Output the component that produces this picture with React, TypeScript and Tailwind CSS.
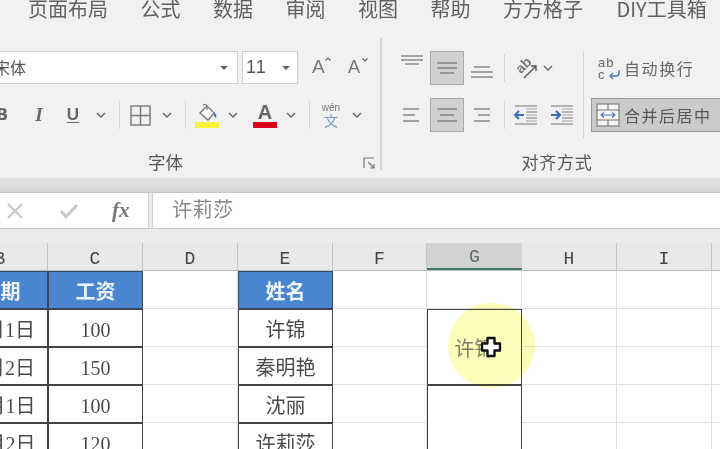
const tabs = ['页面布局', '公式', '数据', '审阅', '视图', '帮助', '方方格子', 'DIY工具箱'];
const columns = ['B', 'C', 'D', 'E', 'F', 'G', 'H', 'I', 'J'];
const serif = "font-['Liberation_Serif','Noto_Sans_CJK_SC',serif]";

const Chev = () => (
  <svg width="10" height="6" viewBox="0 0 10 6" fill="none" stroke="#6b6b6b" strokeWidth="1.5">
    <path d="M1 1l4 4 4-4" />
  </svg>
);

const Caret = () => (
  <svg width="8" height="4" viewBox="0 0 8 4" fill="#666">
    <path d="M0 0h8L4 4z" />
  </svg>
);

const VSep = () => <div className="mx-auto h-[28px] w-px bg-[#d6d6d6]" />;

// lines = [x1, x2, y] triples
const Lines = ({ lines }: { lines: number[][] }) => (
  <svg width="24" height="24" viewBox="0 0 24 24" stroke="#777" strokeWidth="1.3">
    {lines.map((l, i) => (
      <line key={i} x1={l[0]} x2={l[1]} y1={l[2]} y2={l[2]} />
    ))}
  </svg>
);

const Indent = ({ flip }: { flip?: boolean }) => (
  <svg width="24" height="22" viewBox="0 0 24 22" fill="none">
    <g stroke="#777" strokeWidth="1.2">
      <path d="M1 2h22M1 20h22M12 8h11M12 14h11" />
      <path d="M12 5h11M12 11h11M12 17h11" opacity="0.6" />
    </g>
    {flip ? (
      <path d="M1 11h8M6 7l4 4-4 4" stroke="#3f6fb5" strokeWidth="2.2" />
    ) : (
      <path d="M10 11H2M5 7l-4 4 4 4" stroke="#3f6fb5" strokeWidth="2.2" />
    )}
  </svg>
);

const FontGroup = () => (
  <div className="-ml-[15px] flex h-[132px] w-[397px] shrink-0 flex-col border-r-2 border-[#d4d4d4] pt-[13px]">
    <div className="flex h-[33px] items-center">
      <div className="flex h-[33px] w-[253px] items-center justify-between border border-[#cfcfcf] bg-white pl-[8px] pr-[9px] text-[16px] text-[#555]">
        <span className="-mt-[2px]">宋体</span>
        <Caret />
      </div>
      <div className="ml-[4px] flex h-[33px] w-[56px] items-center justify-between border border-[#cfcfcf] bg-white pl-[3px] pr-[7px] font-['Liberation_Sans',sans-serif] text-[18px] tracking-[1px] text-[#555]">
        <span>11</span>
        <Caret />
      </div>
      <div className="relative ml-[14px] w-[16px] font-['Liberation_Sans',sans-serif] text-[19px] text-[#777]">
        A
        <svg className="absolute -right-[3px] top-[4px]" width="6" height="4" viewBox="0 0 6 4" fill="none" stroke="#666" strokeWidth="1.2">
          <path d="M0.5 3.5L3 1l2.5 2.5" />
        </svg>
      </div>
      <div className="relative ml-[20px] w-[16px] font-['Liberation_Sans',sans-serif] text-[18px] text-[#777]">
        A
        <svg className="absolute -right-[4px] top-[4px]" width="6" height="4" viewBox="0 0 6 4" fill="none" stroke="#666" strokeWidth="1.2">
          <path d="M0.5 0.5L3 3l2.5-2.5" />
        </svg>
      </div>
    </div>
    <div className="mt-[14px] flex h-[34px] items-center">
      <div className="w-[34px] text-center font-['DejaVu_Sans',sans-serif] text-[16px] font-bold text-[#666]">B</div>
      <div className="ml-[3px] w-[34px] text-center font-['Liberation_Serif',serif] text-[19px] font-bold italic text-[#666]">I</div>
      <div className="w-[34px] text-center font-['Liberation_Sans',sans-serif] text-[17px] font-bold text-[#666] underline underline-offset-2">U</div>
      <div className="flex w-[22px] justify-center"><Chev /></div>
      <div className="w-[14px]"><VSep /></div>
      <div className="flex w-[28px] justify-center">
        <svg width="21" height="21" viewBox="0 0 21 21" fill="none" stroke="#777" strokeWidth="1.4">
          <rect x="1" y="1" width="19" height="19" />
          <path d="M10.5 1v19M1 10.5h19" />
        </svg>
      </div>
      <div className="flex w-[26px] justify-center"><Chev /></div>
      <div className="w-[10px]"><VSep /></div>
      <div className="flex w-[34px] justify-center">
        <svg width="26" height="26" viewBox="0 0 26 26" fill="none">
          <path d="M6 11l7-7 7 7-6 7z" stroke="#777" strokeWidth="1.3" fill="#fff" />
          <path d="M9 3a3 3 0 0 1 4 1v4" stroke="#777" strokeWidth="1.2" />
          <path d="M20 10c2 2 3 4 2 6l-2-2z" fill="#4d6ea8" />
          <rect x="1" y="20" width="24" height="6" fill="#f5f53a" />
        </svg>
      </div>
      <div className="flex w-[18px] justify-center"><Chev /></div>
      <div className="ml-[6px] flex w-[34px] flex-col items-center">
        <span className="font-['Liberation_Sans',sans-serif] text-[20px] leading-[18px] font-bold text-[#666]">A</span>
        <div className="mt-[1px] h-[6px] w-[24px] bg-[#d9001b]" />
      </div>
      <div className="flex w-[18px] justify-center"><Chev /></div>
      <div className="w-[18px]"><VSep /></div>
      <div className="flex w-[26px] flex-col items-center leading-none">
        <span className="font-['Liberation_Sans',sans-serif] text-[10px] text-[#777]">wén</span>
        <span className="text-[14px] text-[#6f9bd0]">文</span>
      </div>
      <div className="flex w-[26px] justify-center"><Chev /></div>
    </div>
    <div className="relative mt-[22px] flex h-[16px] shrink-0 items-center justify-center pr-[34px] text-[17.5px] text-[#555]">
      <span>字体</span>
      <svg className="absolute right-[5px] top-[3px]" width="12" height="12" viewBox="0 0 12 12" fill="none" stroke="#777" strokeWidth="1.2">
        <path d="M1 11V1h10M5 5l6 6M11 7v4H7" />
      </svg>
    </div>
  </div>
);

const AlignBox = ({ children }: { children: React.ReactNode }) => (
  <div className="flex h-[34px] w-[34px] items-center justify-center border border-[#a9a9a9] bg-[#d0d0d0]">{children}</div>
);

const AlignGroup = () => (
  <div className="flex h-[132px] flex-1 flex-col pt-[13px]">
    <div className="flex h-[87px]">
      <div className="flex w-[201px] shrink-0 flex-col gap-[13px]">
        <div className="flex h-[34px] items-center">
          <div className="ml-[17px] flex w-[25px] justify-center self-start">
            <Lines lines={[[1, 23, 5], [1, 23, 9], [5, 19, 13]]} />
          </div>
          <div className="ml-[6px]">
            <AlignBox><Lines lines={[[2, 22, 7], [2, 22, 12], [5, 19, 17]]} /></AlignBox>
          </div>
          <div className="flex w-[36px] justify-center self-end">
            <Lines lines={[[4, 20, 6], [1, 23, 11], [1, 23, 16]]} />
          </div>
          <div className="w-[8px]"><VSep /></div>
          <div className="flex w-[35px] justify-center">
            <div className="relative h-[24px] w-[24px]">
              <span className="absolute left-[1px] top-[1px] -rotate-45 font-['Liberation_Sans',sans-serif] text-[14px] leading-[16px] font-bold text-[#777]">ab</span>
              <svg className="absolute inset-0" width="24" height="24" viewBox="0 0 24 24" fill="none" stroke="#555" strokeWidth="1.4">
                <path d="M10 22l12-12M17 10h5v5" />
              </svg>
            </div>
          </div>
          <div className="flex w-[10px] justify-center"><Chev /></div>
        </div>
        <div className="flex h-[34px] items-center">
          <div className="ml-[17px] flex w-[25px] justify-center">
            <Lines lines={[[3, 19, 6], [3, 15, 12], [3, 19, 18]]} />
          </div>
          <div className="ml-[6px]">
            <AlignBox><Lines lines={[[2, 22, 6], [5, 19, 12], [2, 22, 18]]} /></AlignBox>
          </div>
          <div className="flex w-[36px] justify-center">
            <Lines lines={[[4, 20, 6], [8, 20, 12], [4, 20, 18]]} />
          </div>
          <div className="w-[8px]"><VSep /></div>
          <div className="ml-[6px] flex w-[24px] justify-center"><Indent /></div>
          <div className="ml-[12px] flex w-[24px] justify-center"><Indent flip /></div>
        </div>
      </div>
      <div className="w-px self-stretch bg-[#d6d6d6]" />
      <div className="flex flex-1 flex-col gap-[13px] pl-[7px]">
        <div className="flex h-[34px] items-center text-[16px] tracking-[1.6px] text-[#666]">
          <div className="relative ml-[6px] h-[24px] w-[26px] shrink-0">
            <span className="absolute left-[1px] -top-[3px] font-['Liberation_Sans',sans-serif] text-[13px] tracking-[1px] text-[#666]">ab</span>
            <span className="absolute left-[1px] top-[9px] font-['Liberation_Sans',sans-serif] text-[13px] text-[#666]">c</span>
            <svg className="absolute inset-0" width="26" height="24" viewBox="0 0 26 24" fill="none" stroke="#4d79b8" strokeWidth="1.4">
              <path d="M22 14v3a3 3 0 0 1-3 3h-6M16 17l-3 3 3 3" />
            </svg>
          </div>
          <span className="ml-[1px] whitespace-nowrap">自动换行</span>
        </div>
        <div className="-mr-[40px] flex h-[34px] items-center border border-[#999] bg-[#cbcbcb] text-[16px] tracking-[1.5px] text-[#555]">
          <svg className="ml-[4px] shrink-0" width="24" height="24" viewBox="0 0 24 24" fill="#f5f5f5" stroke="#777" strokeWidth="1.1">
            <rect x="1" y="1" width="22" height="22" />
            <path d="M1 7h22M1 17h22M12 1v6M12 17v6" />
            <path d="M5 12h14M8 9.5L5 12l3 2.5M16 9.5l3 2.5-3 2.5" stroke="#4d79b8" />
          </svg>
          <span className="ml-[4px] whitespace-nowrap">合并后居中</span>
        </div>
      </div>
    </div>
    <div className="mt-[16px] flex h-[16px] w-[350px] shrink-0 items-center justify-center text-[17px] tracking-[0.8px] text-[#555]">对齐方式</div>
  </div>
);

const Ribbon = () => (
  <div className="h-[178px] overflow-hidden bg-[#f1f1f1]">
    <div className="flex h-[18px] items-center gap-[32.5px] pl-[28px] whitespace-nowrap text-[20px] leading-[18px] text-[#606060]">
      {tabs.map((tab) => (
        <span key={tab} className={tab === 'DIY工具箱' ? 'ml-[1px]' : ''}>{tab}</span>
      ))}
    </div>
    <div className="mt-[20px] flex">
      <FontGroup />
      <AlignGroup />
    </div>
  </div>
);

const FormulaBar = () => (
  <div className="flex h-[37px] border-y border-[#c6c6c6] bg-white">
    <div className="flex w-[148px] shrink-0 items-center">
      <svg className="ml-[6px]" width="18" height="18" viewBox="0 0 18 18" fill="none" stroke="#c8c8c8" strokeWidth="2.2">
        <path d="M2 2l14 14M16 2L2 16" />
      </svg>
      <svg className="ml-[35px]" width="20" height="18" viewBox="0 0 20 18" fill="none" stroke="#c8c8c8" strokeWidth="3">
        <path d="M2 9l5 6L18 3" />
      </svg>
      <span className="ml-[33px] font-['Liberation_Serif',serif] text-[21px] font-bold italic leading-none text-[#777]">fx</span>
    </div>
    <div className="w-[5px] shrink-0 border-x border-[#cfcfcf] bg-[#ececec]" />
    <div className="flex items-center pl-[19px] pb-[3px] text-[20px] tracking-[0.6px] text-[#888]">许莉莎</div>
  </div>
);

type CellProps = {
  text?: string;
  kind?: 'plain' | 'head' | 'boxed' | 'merged';
  span?: boolean;
};

const cellLook = {
  plain: 'border-b border-r border-[#e0e0e0] text-[#4a4a4a]',
  head: 'relative z-10 bg-[#4a85cf] font-bold text-[#eef5ff] outline outline-[1.5px] -outline-offset-1 outline-[#3a4a63]',
  boxed: 'relative z-10 text-[#4a4a4a] outline outline-[1.5px] -outline-offset-1 outline-[#444]',
  merged: 'relative z-10 text-[#808080] outline outline-[1.5px] -outline-offset-1 outline-[#444]',
};

const Cell = ({ text, kind = 'plain', span }: CellProps) => (
  <div className={`flex items-center justify-center whitespace-nowrap pt-[3px] text-[20px] ${cellLook[kind]} ${span ? 'row-span-2' : ''}`}>
    {text}
  </div>
);

const Sheet = () => (
  <div className={`relative h-[220px] overflow-hidden bg-white ${serif}`}>
    <div className="h-[14px] bg-[#ebebeb]" />
    <div className="-ml-[47px] grid h-[28px] w-[900px] grid-cols-[95px_95px_95px_95px_94px_95px_95px_95px_95px] border-b border-[#bdbdbd] bg-[#e9e9e9] font-['Liberation_Mono',monospace] text-[18px] leading-none text-[#444]">
      {columns.map((col) => (
        <div
          key={col}
          className={
            col === 'G'
              ? 'flex items-center justify-center border-b-2 border-[#44796a] bg-[#d2d2d2] pt-[3px] text-[#5d6b66]'
              : 'flex items-center justify-center border-r border-[#c4c4c4] pt-[5px]'
          }
        >
          {col}
        </div>
      ))}
    </div>
    <div className="-ml-[47px] grid w-[900px] grid-cols-[95px_95px_95px_95px_94px_95px_95px_95px_95px] auto-rows-[38px]">
      <Cell text="日期" kind="head" />
      <Cell text="工资" kind="head" />
      <Cell />
      <Cell text="姓名" kind="head" />
      <Cell />
      <Cell />
      <Cell />
      <Cell />
      <Cell />

      <Cell text="11月1日" kind="boxed" />
      <Cell text="100" kind="boxed" />
      <Cell />
      <Cell text="许锦" kind="boxed" />
      <Cell />
      <Cell text="许锦" kind="merged" span />
      <Cell />
      <Cell />
      <Cell />

      <Cell text="11月2日" kind="boxed" />
      <Cell text="150" kind="boxed" />
      <Cell />
      <Cell text="秦明艳" kind="boxed" />
      <Cell />
      <Cell />
      <Cell />
      <Cell />

      <Cell text="12月1日" kind="boxed" />
      <Cell text="100" kind="boxed" />
      <Cell />
      <Cell text="沈丽" kind="boxed" />
      <Cell />
      <Cell kind="merged" span />
      <Cell />
      <Cell />
      <Cell />

      <Cell text="12月2日" kind="boxed" />
      <Cell text="120" kind="boxed" />
      <Cell />
      <Cell text="许莉莎" kind="boxed" />
      <Cell />
      <Cell />
      <Cell />
      <Cell />
    </div>
    {/* pointer highlight and cross cursor */}
    <div className="absolute left-[448px] top-[74px] z-20 h-[85px] w-[87px] rounded-full bg-[#fcfdb4] opacity-90 mix-blend-multiply" />
    <svg className="absolute left-[480px] top-[107px] z-30" width="22" height="22" viewBox="0 0 22 22" fill="#fff" stroke="#111" strokeWidth="2.4">
      <path d="M7.5 2h7v5.5H20v7h-5.5V20h-7v-5.5H2v-7h5.5z" strokeLinejoin="round" />
    </svg>
  </div>
);

export default function App() {
  return (
    <div className="h-[449px] w-[720px] overflow-hidden bg-white font-['Noto_Sans_CJK_SC',sans-serif] blur-[0.5px]">
      <Ribbon />
      <div className="h-[14px] bg-gradient-to-b from-[#e4e4e4] to-[#d6d6d6]" />
      <FormulaBar />
      <Sheet />
    </div>
  );
}
